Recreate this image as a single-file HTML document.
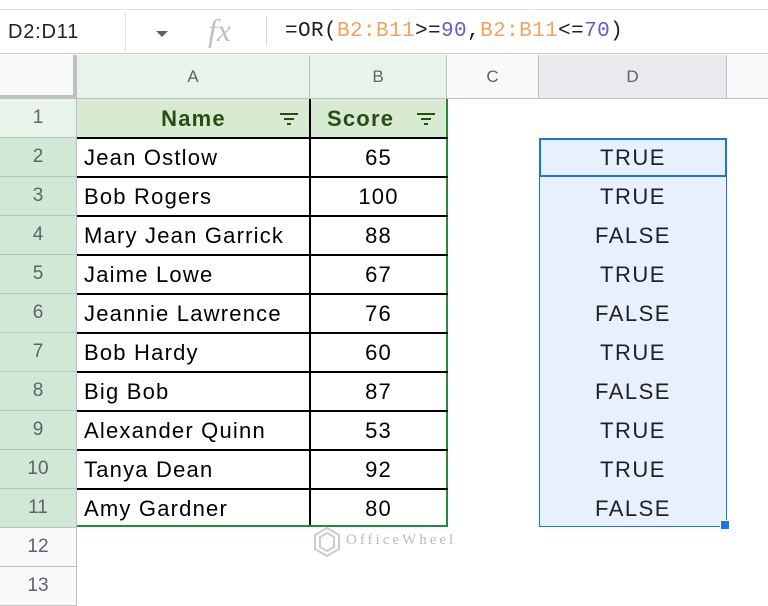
<!DOCTYPE html><html><head><style>
body{margin:0;width:768px;height:579px;overflow:hidden;background:#fff;font-family:"Liberation Sans",Arial,sans-serif;position:relative}
.a{position:absolute;box-sizing:border-box}
.hdr{background:#f8f9fa;color:#5f6368;font-size:17px;text-align:center}
.rn{font-size:19px}
.cell{font-size:22px;color:#000;letter-spacing:1.2px}
</style></head><body>
<div class="a" style="left:0;top:0;width:768px;height:10px;background:#fff;border-bottom:1px solid #e0e0e0"></div>
<div class="a" style="left:0;top:10px;width:768px;height:44px;background:#fff;border-bottom:1px solid #c7c7c7"></div>
<div class="a" style="left:8px;top:21px;font-size:20px;color:#202124;letter-spacing:0.8px">D2:D11</div>
<div class="a" style="left:156px;top:31px;width:0;height:0;border-left:6px solid transparent;border-right:6px solid transparent;border-top:6px solid #5f6368"></div>
<div class="a" style="left:125px;top:13px;width:1px;height:38px;background:#e0e0e0"></div>
<div class="a" style="left:208px;top:12px;font-family:'Liberation Serif',serif;font-style:italic;font-size:32px;color:#c0c0c0">fx</div>
<div class="a" style="left:266px;top:16px;width:1px;height:30px;background:#dadce0"></div>
<div class="a" style="left:285px;top:20px;font-family:'Liberation Mono',monospace;font-size:21px;color:#202124;letter-spacing:0.4px">=OR(<span style="color:#f4a261">B2:B11</span>&gt;=<span style="color:#6a5acd">90</span>,<span style="color:#f4a261">B2:B11</span>&lt;=<span style="color:#6a5acd">70</span>)</div>
<div class="a hdr" style="left:0;top:55px;width:77px;height:44px;border-right:4px solid #c0c0c0;border-bottom:4px solid #c0c0c0;background:#f8f9fa"></div>
<div class="a hdr" style="left:77px;top:55px;width:233px;height:44px;background:#e6f4ea;border-right:1px solid #c0c0c0;border-bottom:1px solid #c0c0c0;line-height:43px">A</div>
<div class="a hdr" style="left:310px;top:55px;width:137px;height:44px;background:#e6f4ea;border-right:1px solid #c0c0c0;border-bottom:1px solid #c0c0c0;line-height:43px">B</div>
<div class="a hdr" style="left:447px;top:55px;width:92px;height:44px;border-right:1px solid #c0c0c0;border-bottom:1px solid #c0c0c0;line-height:43px">C</div>
<div class="a hdr" style="left:539px;top:55px;width:188px;height:44px;background:#e8eaed;border-right:1px solid #c0c0c0;border-bottom:1px solid #c0c0c0;line-height:43px">D</div>
<div class="a hdr" style="left:727px;top:55px;width:41px;height:44px;border-bottom:1px solid #c0c0c0"></div>
<div id="rh"></div>
<div class="a" style="left:77px;top:99px;width:370px;height:39px;background:#d9ead3"></div>
<div class="a" style="left:77px;top:99px;width:233px;height:39px;line-height:39px;text-align:center;font-size:22px;font-weight:bold;color:#274e13;letter-spacing:1.2px">Name</div>
<div class="a" style="left:310px;top:99px;width:137px;height:39px;line-height:39px;padding-left:17px;font-size:22px;font-weight:bold;color:#274e13;letter-spacing:1.2px">Score</div>
<svg class="a" style="left:278px;top:110px" width="22" height="18"><path d="M2 4H20M6 9H16M9 14H13" stroke="#274e13" stroke-width="2"/></svg>
<svg class="a" style="left:415px;top:110px" width="22" height="18"><path d="M2 4H20M6 9H16M9 14H13" stroke="#274e13" stroke-width="2"/></svg>
<div class="a" style="left:309px;top:99px;width:2px;height:428px;background:#000"></div>
<div class="a" style="left:446px;top:99px;width:2px;height:428px;background:#1e8e3e"></div>
<div class="a" style="left:77px;top:525px;width:371px;height:2px;background:#1e8e3e"></div>
<div id="rows"></div>
<div class="a" style="left:539px;top:138px;width:188px;height:389px;background:#e8f0fe;border:1.5px solid #1a73e8"></div>
<div class="a" style="left:539px;top:138px;width:188px;height:39px;border:2px solid #1a73e8"></div>
<div class="a" style="left:720px;top:520px;width:10px;height:10px;background:#1a73e8;border:1px solid #fff"></div>
<div id="dv"></div>
<svg class="a" style="left:313px;top:526px" width="28" height="32"><path d="M14 2L26 9V23L14 30L2 23V9Z M14 7L21 11V21L14 25L7 21V11Z" fill="none" stroke="#ccc" stroke-width="2"/></svg>
<div class="a" style="left:346px;top:532px;font-family:'Liberation Serif',serif;font-size:15px;color:#bbb;letter-spacing:3px">OfficeWheel</div>
<script>
var names=["Jean Ostlow","Bob Rogers","Mary Jean Garrick","Jaime Lowe","Jeannie Lawrence","Bob Hardy","Big Bob","Alexander Quinn","Tanya Dean","Amy Gardner"];
var sc=[65,100,88,67,76,60,87,53,92,80];
var d=["TRUE","TRUE","FALSE","TRUE","FALSE","TRUE","FALSE","TRUE","TRUE","FALSE"];
var h="";
for(var i=0;i<13;i++){var t=99+i*39;var g=i<11;
h+='<div class="a hdr rn" style="left:0;top:'+t+'px;width:77px;height:39px;line-height:38px;background:'+(i==0?'#e6f4ea':g?'#d0e8d6':'#f8f9fa')+';border-bottom:1px solid #c0c0c0;border-right:1px solid #c0c0c0">'+(i+1)+'</div>';}
document.getElementById('rh').outerHTML=h;h="";
for(var i=0;i<10;i++){var t=138+i*39;
h+='<div class="a" style="left:77px;top:'+(t-1)+'px;width:371px;height:2px;background:#000"></div>';
h+='<div class="a cell" style="left:84px;top:'+t+'px;line-height:39px">'+names[i]+'</div>';
h+='<div class="a cell" style="left:310px;top:'+t+'px;width:137px;text-align:center;line-height:39px">'+sc[i]+'</div>';}
document.getElementById('rows').outerHTML=h;h="";
for(var i=0;i<10;i++){var t=138+i*39;
h+='<div class="a cell" style="left:539px;top:'+t+'px;width:188px;text-align:center;line-height:39px;color:#202124;letter-spacing:1.5px">'+d[i]+'</div>';}
document.getElementById('dv').outerHTML=h;
</script>
</body></html>
